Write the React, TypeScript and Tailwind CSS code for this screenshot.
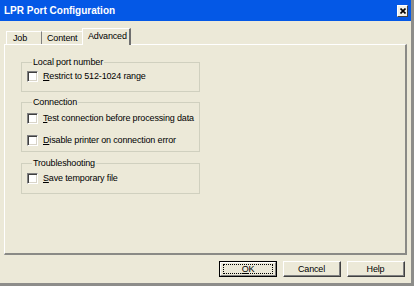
import React from "react"

function Check({ label }: { label: string }) {
  return (
    <div className="flex items-center gap-[5px] h-[11px] whitespace-nowrap">
      <span className="w-[11px] h-[11px] bg-white border border-t-[#808080] border-l-[#808080] border-b-white border-r-white shadow-[inset_1px_1px_0_#404040,inset_-1px_-1px_0_#d8d4c8] shrink-0" />
      <span className="leading-[11px]">
        <span className="underline">{label[0]}</span>
        {label.slice(1)}
      </span>
    </div>
  )
}

function Group({ title, children, className }: { title: string; children: React.ReactNode; className?: string }) {
  return (
    <fieldset className={"border border-[#d0d0bf] w-[179px] ml-[16px] pl-[5px] " + (className ?? "")}>
      <legend className="ml-[5px] px-[1px] leading-[10px] whitespace-nowrap">{title}</legend>
      {children}
    </fieldset>
  )
}

function Btn({ children, primary }: { children: React.ReactNode; primary?: boolean }) {
  return (
    <div
      className={
        "w-[58px] h-[16px] flex " +
        (primary ? "border border-black" : "border border-t-white border-l-white border-b-[#404040] border-r-[#404040]")
      }
    >
      {primary ? (
        <div className="w-full h-full border border-t-white border-l-white border-b-[#808080] border-r-[#808080] flex items-center justify-center">
          <div className="w-[50px] h-[10px] border border-dotted border-black flex items-center justify-center leading-[9px]">
            {children}
          </div>
        </div>
      ) : (
        <div className="w-full h-full border-b border-r border-b-[#808080] border-r-[#808080] flex items-center justify-center">
          {children}
        </div>
      )}
    </div>
  )
}

export default function App() {
  return (
    <div
      className="w-[414px] h-[286px] bg-[#ece9d8] text-black text-[9px] tracking-[-0.15px] leading-[10px] flex flex-col overflow-hidden border-r-[3px] border-b-[3px] border-r-[#8d8d8a] border-b-[#8d8d8a]"
      style={{ fontFamily: '"Liberation Sans", Arial, sans-serif' }}
    >
      <div className="h-[21px] bg-[#0458e6] flex items-center justify-between pl-[4px] pr-[3px] shrink-0">
        <span className="text-white font-bold text-[10px] tracking-normal leading-[12px]">LPR Port Configuration</span>
        <div className="w-[11px] h-[12px] bg-[#f0efe8] border border-t-white border-l-white border-b-[#404040] border-r-[#404040] flex items-center justify-center">
          <svg width="6" height="6" viewBox="0 0 6 6">
            <path d="M0.5 0.5 L5.5 5.5 M5.5 0.5 L0.5 5.5" stroke="black" strokeWidth="1.6" />
          </svg>
        </div>
      </div>

      <div className="flex-1 px-[4px] pt-[7px] flex flex-col">
        <div className="flex items-end h-[16px] pl-[2px] relative z-10">
          <div className="h-[13px] w-[36px] pl-[6px] flex items-center border-l border-t border-white border-r border-r-[#808080]">Job</div>
          <div className="h-[13px] w-[40px] pl-[5px] flex items-center border-t border-white">Content</div>
          <div className="h-[17px] w-[49px] pl-[5px] pb-[3px] -mb-[1px] bg-[#ece9d8] flex items-center border-t border-l border-white border-r-2 border-r-[#6f6f6f]">Advanced</div>
        </div>
        <div className="h-[211px] border-t border-l border-white border-r-2 border-b-2 border-r-[#8a8a86] border-b-[#8a8a86] pt-[12px] flex flex-col">
          <Group title="Local port number" className="h-[35px]">
            <div className="pt-[4px]">
              <Check label="Restrict to 512-1024 range" />
            </div>
          </Group>
          <Group title="Connection" className="h-[55px] mt-[5px]">
            <div className="pt-[6px] flex flex-col gap-[11px]">
              <Check label="Test connection before processing data" />
              <Check label="Disable printer on connection error" />
            </div>
          </Group>
          <Group title="Troubleshooting" className="h-[36px] mt-[6px]">
            <div className="pt-[5px]">
              <Check label="Save temporary file" />
            </div>
          </Group>
        </div>
        <div className="flex justify-end gap-[6px] pt-[6px] pr-[2px]">
          <Btn primary>
            <span className="underline">O</span>K
          </Btn>
          <Btn>Cancel</Btn>
          <Btn>Help</Btn>
        </div>
      </div>
    </div>
  )
}
